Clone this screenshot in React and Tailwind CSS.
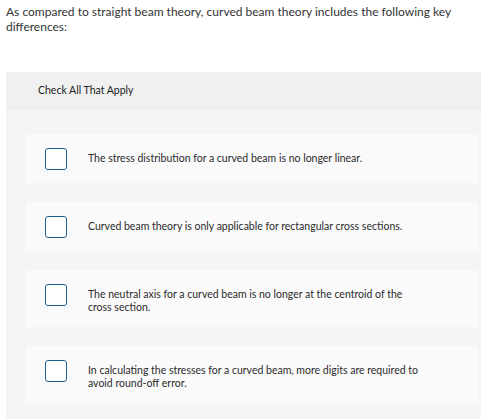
export default function App() {
    const choices = [
        'The stress distribution for a curved beam is no longer linear.',
        'Curved beam theory is only applicable for rectangular cross sections.',
        'The neutral axis for a curved beam is no longer at the centroid of the cross section.',
        'In calculating the stresses for a curved beam, more digits are required to avoid round-off error.',
    ];

    return (
        <div className="min-h-[419px] bg-white overflow-hidden" style={{ fontFamily: 'Lato, "Noto Sans", sans-serif' }}>
            {/* Question prompt */}
            <p className="pl-[6px] pr-[20px] pt-[4px] text-[12px] leading-[15px] text-[#333]">
                As compared to straight beam theory, curved beam theory includes the following key differences:
            </p>

            {/* Answer panel */}
            <div className="mt-[38px] ml-[6px]">
                <div className="h-[38px] flex items-center pl-[32px] bg-[#f0f0f0] text-[10.5px] text-[#222]">
                    Check All That Apply
                </div>
                <div className="bg-[#f5f5f5] pl-[20px] pr-[3px] pt-[24px] pb-[20px] flex flex-col gap-[19px]">
                    {choices.map((text, i) => (
                        <label key={i} className="flex items-start bg-[#fafafa] rounded-[2px] pt-[14px] pb-[13px] pl-[19px] pr-[54px]">
                            <span className="shrink-0 w-[22px] h-[22px] rounded-[3px] border-[1.5px] border-[#1d5f8f] bg-white" />
                            <span className="pl-[21px] pt-[4px] text-[10.5px] leading-[13px] text-[#2a2a2a]">{text}</span>
                        </label>
                    ))}
                </div>
            </div>
        </div>
    );
}
